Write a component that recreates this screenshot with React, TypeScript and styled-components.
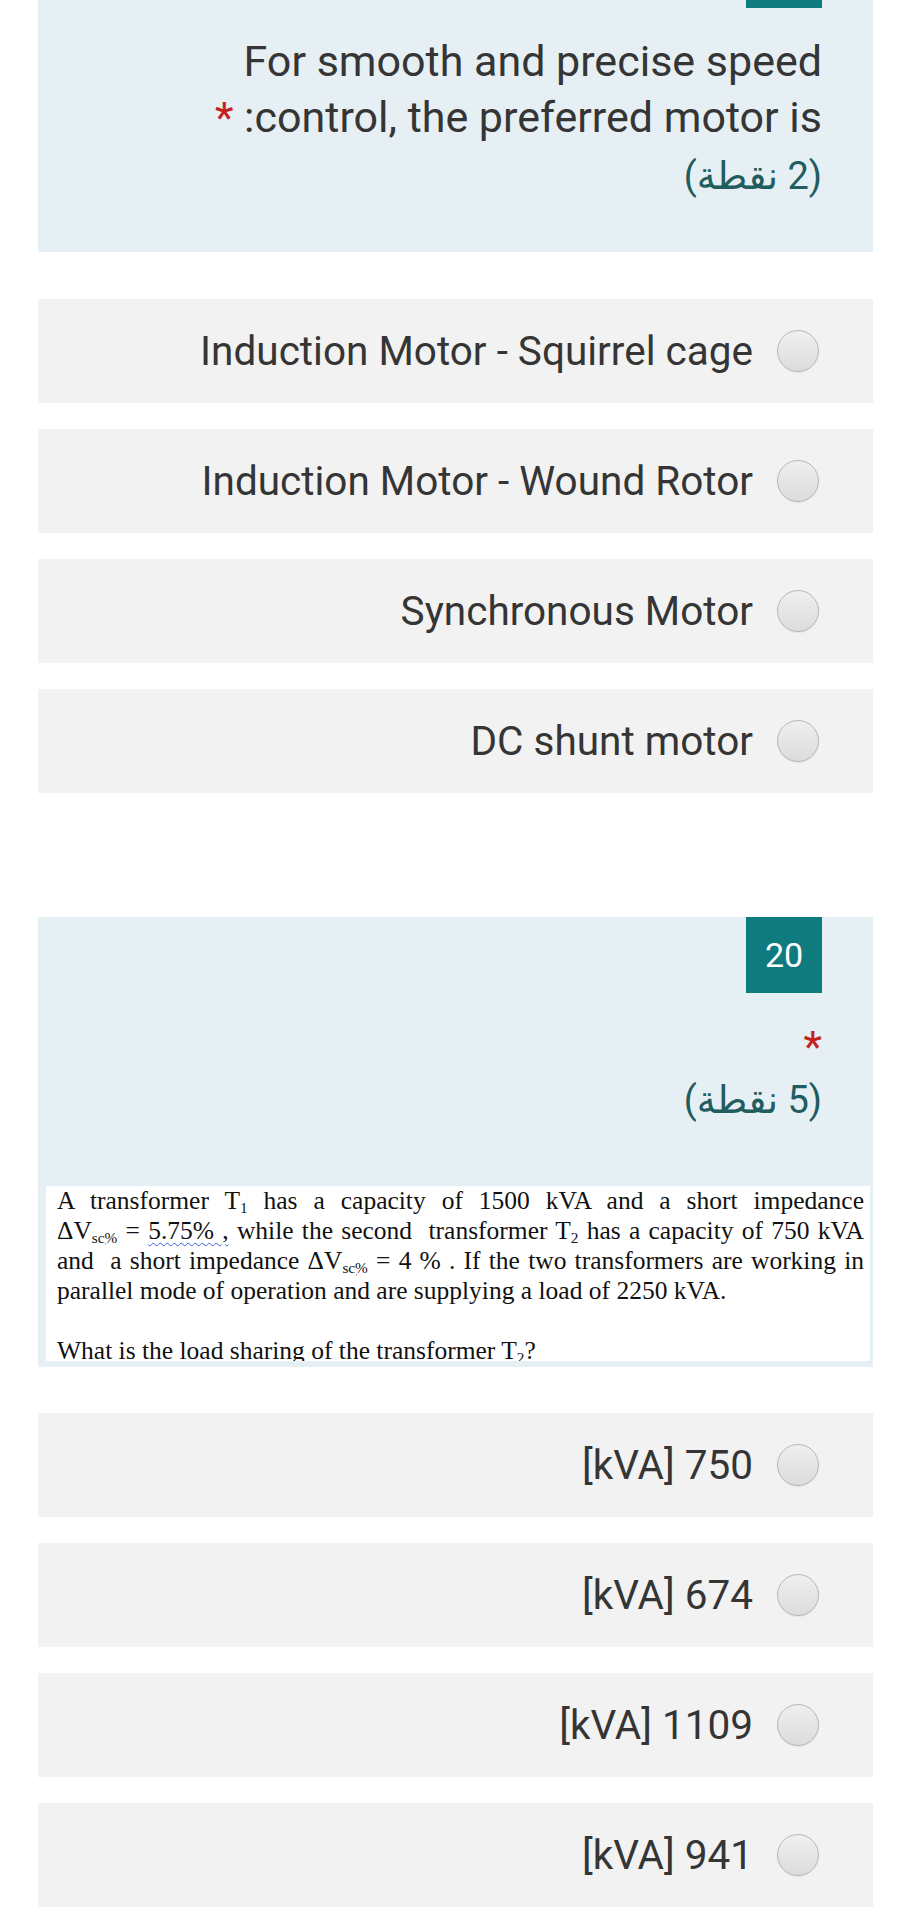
import React from 'react'
import styled, { createGlobalStyle } from 'styled-components'

const GlobalStyle = createGlobalStyle`
  html, body {
    margin: 0;
    padding: 0;
    background: #fff;
  }
  body {
    font-family: Roboto, 'DejaVu Sans', sans-serif;
    -webkit-font-smoothing: antialiased;
  }
`

// page is scrolled: the previous question's badge shows its last few px
const Page = styled.div`
  margin-top: -68px;
  padding: 0 38px;
`

const Card = styled.section<{ $gap: number }>`
  background: #e6eff3;
  margin-top: ${({ $gap }) => $gap}px;
  display: flex;
  flex-direction: column;
`

const Header = styled.div<{ $bottom: number }>`
  display: flex;
  flex-direction: column;
  align-items: flex-start;
  padding: 0 51px ${({ $bottom }) => $bottom}px 24px;
`

const Badge = styled.div`
  width: 76px;
  height: 76px;
  background: #0f7b7e;
  color: #fff;
  font-size: 34px;
  display: flex;
  align-items: center;
  justify-content: center;
`

const Title = styled.div`
  margin-top: 25px;
  font-size: 43px;
  line-height: 56px;
  color: #353535;
`

const Star = styled.span`
  color: #c5221f;
`

const Points = styled.div<{ $gap: number }>`
  margin-top: ${({ $gap }) => $gap}px;
  font-size: 38px;
  line-height: 50px;
  color: #1f5d5f;
`

const Figure = styled.div`
  direction: ltr;
  margin: 0 3px 6px 8px;
  height: 175px;
  overflow: hidden;
  background: #fff;
  padding: 0 6px 0 11px;
  font-family: 'Liberation Serif', 'Times New Roman', serif;
  font-size: 25.5px;
  line-height: 30px;
  color: #111;
`

const FigLine = styled.div<{ $justify?: boolean }>`
  min-height: 30px;
  text-align: ${({ $justify }) => ($justify ? 'justify' : 'left')};
  text-align-last: ${({ $justify }) => ($justify ? 'justify' : 'left')};
`

const Sub = styled.sub`
  font-size: 0.6em;
  line-height: 0;
  vertical-align: -0.28em;
`

const Squiggle = styled.span<{ $color: string }>`
  text-decoration: underline wavy ${({ $color }) => $color};
  text-decoration-thickness: 1px;
  text-underline-offset: 3px;
`

const Options = styled.div<{ $gap: number }>`
  margin-top: ${({ $gap }) => $gap}px;
  display: flex;
  flex-direction: column;
  gap: 26px;
`

const Option = styled.label`
  display: flex;
  align-items: center;
  gap: 24px;
  height: 104px;
  padding: 0 54px 0 20px;
  background: #f2f2f2;
  font-size: 40.5px;
  color: #353535;
`

const Radio = styled.span`
  flex: none;
  width: 40px;
  height: 40px;
  border-radius: 50%;
  border: 1.5px solid #b7b7b7;
  background: linear-gradient(#efefef, #dcdcdc);
  box-shadow: 0 1px 1px rgba(0, 0, 0, 0.06);
`

const OptionList: React.FC<{ items: string[]; gap: number }> = ({ items, gap }) => (
  <Options $gap={gap}>
    {items.map((item) => (
      <Option key={item}>
        <Radio />
        <span>{item}</span>
      </Option>
    ))}
  </Options>
)

export default function App() {
  return (
    <>
      <GlobalStyle />
      <Page dir="rtl">
        <Card $gap={0}>
          <Header $bottom={51}>
            <Badge>19</Badge>
            <Title>
              For smooth and precise speed
              <br />
              control, the preferred motor is: <Star>*</Star>
            </Title>
            <Points $gap={6}>(2 نقطة)</Points>
          </Header>
        </Card>

        <OptionList
          gap={47}
          items={[
            'Induction Motor - Squirrel cage',
            'Induction Motor - Wound Rotor',
            'Synchronous Motor',
            'DC shunt motor',
          ]}
        />

        <Card $gap={124}>
          <Header $bottom={61}>
            <Badge>20</Badge>
            <Title>
              <Star>*</Star>
            </Title>
            <Points $gap={1}>(5 نقطة)</Points>
          </Header>
          <Figure>
            <FigLine $justify>
              A transformer T<Sub>1</Sub> has a capacity of 1500 kVA and a short impedance
            </FigLine>
            <FigLine $justify>
              ΔV<Squiggle $color="#d33"><Sub>sc%</Sub></Squiggle> = <Squiggle $color="#3b5bdb">5.75% ,</Squiggle> while the
              second&nbsp; transformer T<Sub>2</Sub> has a capacity of 750 kVA
            </FigLine>
            <FigLine $justify>
              and&nbsp; a short impedance ΔV<Squiggle $color="#d33"><Sub>sc%</Sub></Squiggle> = 4 % . If the two
              transformers are working in
            </FigLine>
            <FigLine>parallel mode of operation and are supplying a load of 2250 kVA.</FigLine>
            <FigLine />
            <FigLine>
              What is the load sharing of the transformer T<Sub>2</Sub>?
            </FigLine>
          </Figure>
        </Card>

        <OptionList gap={46} items={['750 [kVA]', '674 [kVA]', '1109 [kVA]', '941 [kVA]']} />
      </Page>
    </>
  )
}
